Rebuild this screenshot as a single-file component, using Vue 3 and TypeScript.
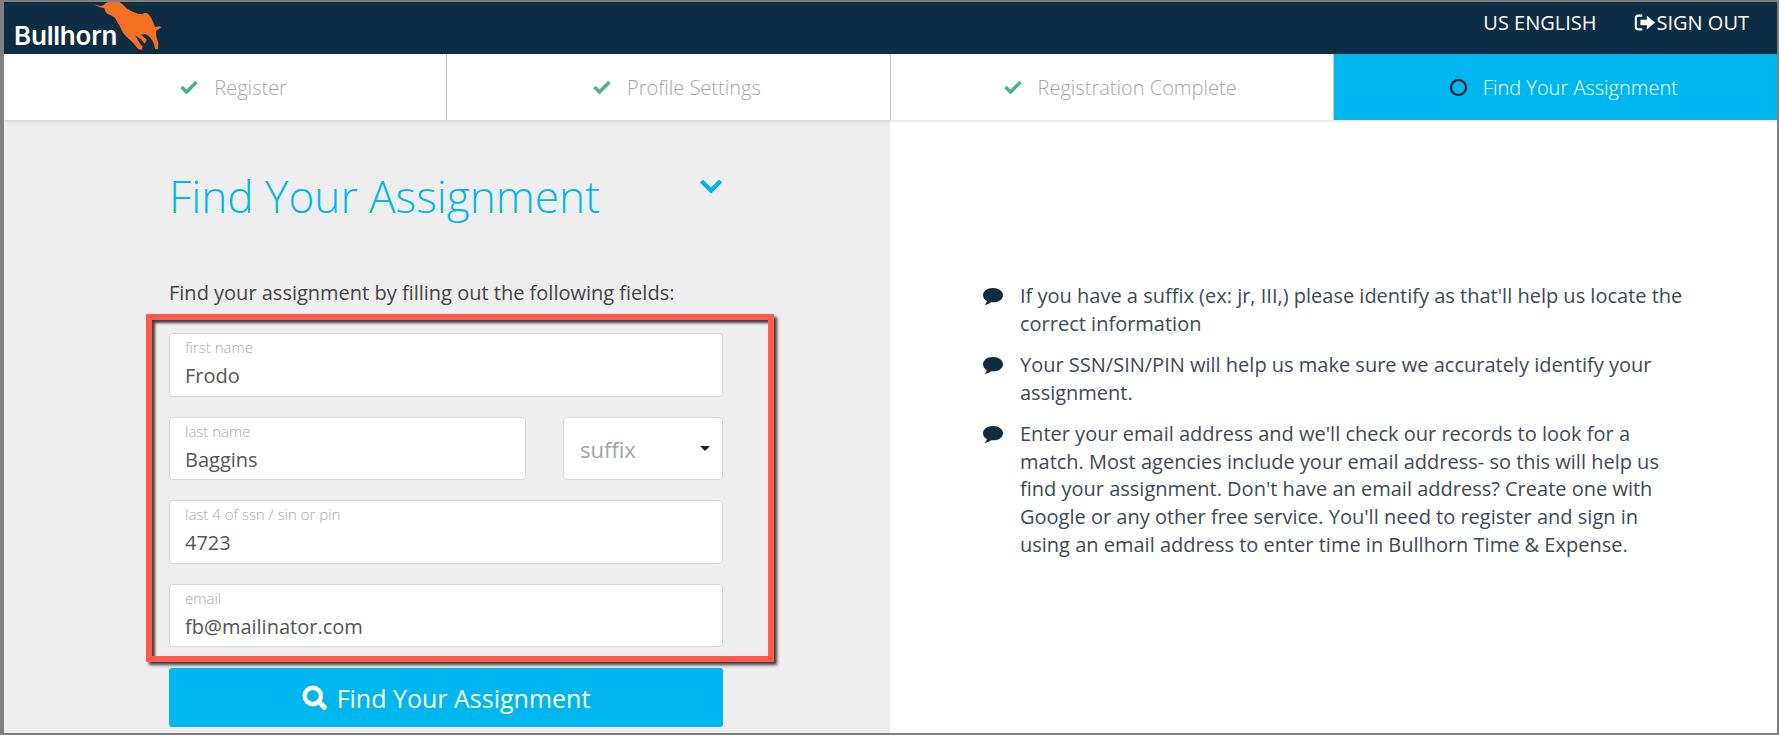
<script setup lang="ts">
interface Step { label: string; done: boolean }
const steps: Step[] = [
  { label: 'Register', done: true },
  { label: 'Profile Settings', done: true },
  { label: 'Registration Complete', done: true },
  { label: 'Find Your Assignment', done: false },
]
const tips: string[] = [
  "If you have a suffix (ex: jr, III,) please identify as that'll help us locate the correct information",
  'Your SSN/SIN/PIN will help us make sure we accurately identify your assignment.',
  "Enter your email address and we'll check our records to look for a match. Most agencies include your email address- so this will help us find your assignment. Don't have an email address? Create one with Google or any other free service. You'll need to register and sign in using an email address to enter time in Bullhorn Time & Expense.",
]
</script>

<template>
  <div class="frame">
    <header class="topbar">
      <div class="logo">
        <span class="wordmark">Bullhorn</span>
        <svg class="bull" viewBox="0 0 255 168" width="85" height="56">
          <path fill="#f36f21" d="M25 13 L45 18 L56 15 C62 9 68 5 78 5 L102 5 C110 9 116 16 124 24 C134 32 148 38 160 42 L172 42 C178 37 186 38 192 44 C200 54 206 68 210 81 L225 79 L228 83 L213 92 C212 104 216 116 220 130 L219 148 L210 146 C208 136 206 128 201 120 C196 112 188 106 180 102 L168 104 C174 110 182 114 186 120 L179 131 L168 118 L150 106 L166 132 L173 140 L170 150 L160 148 C152 138 146 130 138 122 C128 114 120 106 114 98 C108 86 100 70 90 54 C84 48 74 44 66 41 C62 36 60 30 58 25 L45 22 Z"/>
        </svg>
      </div>
      <nav class="toplinks">
        <span>US ENGLISH</span>
        <span class="signout">
          <svg viewBox="0 0 24 20" width="22" height="19">
            <path fill="none" stroke="#fff" stroke-width="2.200" d="M9 2.500H4.500A2.500 2.500 0 0 0 2 5v10a2.500 2.500 0 0 0 2.500 2.500H9"/>
            <path fill="#fff" d="M7 7h7V2.500L23 10l-9 7.500V13H7z"/>
          </svg>
          SIGN OUT
        </span>
      </nav>
    </header>

    <div class="steps">
      <div v-for="s in steps" :key="s.label" class="step" :class="{ active: !s.done }">
        <svg v-if="s.done" class="check" viewBox="0 0 18 14" width="18" height="14">
          <path fill="none" stroke="#4fb286" stroke-width="3.600" d="M1.500 7l5 5L16.500 2"/>
        </svg>
        <span v-else class="ring"></span>
        <span>{{ s.label }}</span>
      </div>
    </div>

    <main class="content">
      <section class="left">
        <div class="title-row">
          <h1>Find Your Assignment</h1>
          <svg class="chev" viewBox="0 0 24 16" width="24" height="16">
            <path fill="none" stroke="#00b6ee" stroke-width="4.500" d="M2.500 3l9.500 9.500L21.500 3"/>
          </svg>
        </div>
        <p class="intro">Find your assignment by filling out the following fields:</p>
        <div class="form">
          <div class="annotation"></div>
          <div class="field"><label>first name</label><span class="value">Frodo</span></div>
          <div class="row">
            <div class="field grow"><label>last name</label><span class="value">Baggins</span></div>
            <div class="field suffix"><span class="placeholder">suffix</span><i class="caret"></i></div>
          </div>
          <div class="field"><label>last 4 of ssn / sin or pin</label><span class="value">4723</span></div>
          <div class="field"><label>email</label><span class="value">fb@mailinator.com</span></div>
        </div>
        <button class="submit" type="button">
          <svg viewBox="0 0 23 23" width="25" height="25">
            <circle cx="10" cy="10" r="7.500" fill="none" stroke="#fff" stroke-width="4"/>
            <path stroke="#fff" stroke-width="4.500" stroke-linecap="round" d="M15.500 15.500L20.500 20.500"/>
          </svg>
          <span>Find Your Assignment</span>
        </button>
      </section>
      <section class="right">
        <ul>
          <li v-for="t in tips" :key="t">
            <svg viewBox="1 1 20 16" width="20" height="17" preserveAspectRatio="none">
              <path fill="#0e2d42" d="M11 1C5 1 1 4 1 7.800c0 2.400 1.500 4.300 3.800 5.500C4.600 14.800 3.500 16 2.500 17c2.700-.3 5-1.500 6.500-2.600.7.100 1.300.1 2 .1 6 0 10-3 10-6.700S17 1 11 1z"/>
            </svg>
            <span>{{ t }}</span>
          </li>
        </ul>
      </section>
    </main>
  </div>
</template>

<style>
html, body { margin: 0; height: 100%; overflow: hidden; background: #fff; }
</style>

<style scoped>
.frame {
  box-sizing: border-box;
  width: 1779px;
  height: 735px;
  display: flex;
  flex-direction: column;
  border: solid #7f7f7f;
  border-width: 2px 2px 2px 4px;
  font-family: "Open Sans", "Liberation Sans", sans-serif;
  overflow: hidden;
}
.topbar {
  height: 52px;
  flex: none;
  background: #0e2d42;
  display: flex;
  justify-content: space-between;
  color: #fff;
}
.logo { position: relative; padding: 18px 0 0 10px; }
.wordmark { font: 600 26px/32px "Inter", "Liberation Sans", sans-serif; letter-spacing: -0.2px; color: #fff; }
.bull { position: absolute; left: 81px; top: -2px; }
.toplinks {
  display: flex;
  align-items: center;
  gap: 37px;
  padding: 0 28px 12px 0;
  font-size: 20px;
}
.signout { display: flex; align-items: center; gap: 1px; }
.steps {
  height: 66px;
  flex: none;
  display: grid;
  grid-template-columns: repeat(4, 1fr);
  background: #fff;
  box-shadow: 0 1px 3px rgba(0, 0, 0, .14);
  position: relative;
}
.step {
  display: flex;
  align-items: center;
  justify-content: center;
  gap: 16px;
  padding-left: 17px;
  font-size: 20px;
  font-weight: 300;
  color: #a6a6a6;
  border-right: 1px solid #c9c9c9;
}
.step:last-child { border-right: 0; }
.step.active { background: #00b6ee; color: #fff; }
.ring { width: 13px; height: 13px; border: 2.500px solid #07141c; border-radius: 50%; }
.content { flex: 1; display: grid; grid-template-columns: 886px 1fr; min-height: 0; }
.left { background: #eee; padding: 0 167px 0 165px; }
.title-row { height: 157px; display: flex; justify-content: space-between; }
h1 {
  margin: 47px 0 0;
  font-size: 44.200px;
  line-height: 58px;
  font-weight: 300;
  color: #00b6ee;
}
.chev { margin: 58px 0 0; }
.intro { margin: 0; height: 56px; font-size: 20px; line-height: 32px; color: #444; }
.form { position: relative; display: flex; flex-direction: column; gap: 20px; }
.annotation {
  position: absolute;
  left: -23px;
  right: -51px;
  top: -19px;
  bottom: -15px;
  border: 6px solid #ff5a4c;
  box-shadow: 3px 3px 3px rgba(0, 0, 0, .75), inset 3px 3px 3px rgba(0, 0, 0, .75);
  pointer-events: none;
  z-index: 1;
}
.row { display: flex; gap: 37px; }
.field {
  box-sizing: border-box;
  height: 63.500px;
  background: #fff;
  border: 1px solid #d8d8d8;
  border-radius: 4px;
  padding: 5px 15px 0;
  display: flex;
  flex-direction: column;
}
.grow { flex: 1; }
.suffix { width: 160px; flex: none; flex-direction: row; align-items: center; justify-content: space-between; padding: 2px 12px 0 16px; }
label { font-size: 15px; line-height: 17px; font-weight: 300; color: #a8a8a8; }
.value { margin-top: 3px; font-size: 20px; line-height: 34px; color: #555; }
.placeholder { font-size: 22px; color: #a3a3a3; }
.caret { width: 0; height: 0; border: 5px solid transparent; border-top-color: #222; border-bottom: 0; margin-top: -2px; }
.submit {
  display: flex;
  align-items: center;
  justify-content: center;
  gap: 10px;
  width: 100%;
  height: 59px;
  margin-top: 21px;
  border: 0;
  border-radius: 3px;
  background: #00b6ee;
  color: #fff;
  font-family: inherit;
  font-size: 25px;
}
.right { background: #fff; padding: 162px 0 0 93px; }
ul { list-style: none; margin: 0; padding: 0; width: 703px; color: #3c4a55; font-size: 20px; line-height: 27.700px; }
li { display: flex; gap: 17px; margin-bottom: 13.500px; }
li svg { flex: none; margin-top: 6px; }
</style>
